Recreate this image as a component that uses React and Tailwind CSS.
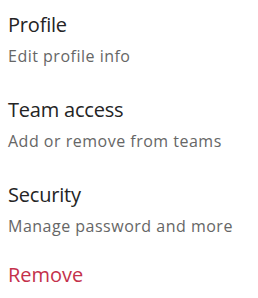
const ITEMS = [
  { title: "Profile", desc: "Edit profile info" },
  { title: "Team access", desc: "Add or remove from teams" },
  { title: "Security", desc: "Manage password and more" },
];

export default function App() {
  return (
    <div
      className="min-h-screen bg-white px-2 pt-[11px]"
      style={{ fontFamily: '"Segoe UI", "Open Sans", sans-serif' }}
    >
      <div className="flex flex-col gap-[29px]">
        {ITEMS.map((item) => (
          <button key={item.title} className="flex flex-col items-start text-left">
            <span className="text-[20px] leading-[28px] tracking-[-0.2px] text-[#242424]">
              {item.title}
            </span>
            <span className="mt-[6px] text-[16px] leading-[22px] tracking-[0.5px] text-[#666666]">
              {item.desc}
            </span>
          </button>
        ))}
        <button className="-mt-[5px] text-left text-[20px] leading-[28px] text-[#c4314b]">
          Remove
        </button>
      </div>
    </div>
  );
}
